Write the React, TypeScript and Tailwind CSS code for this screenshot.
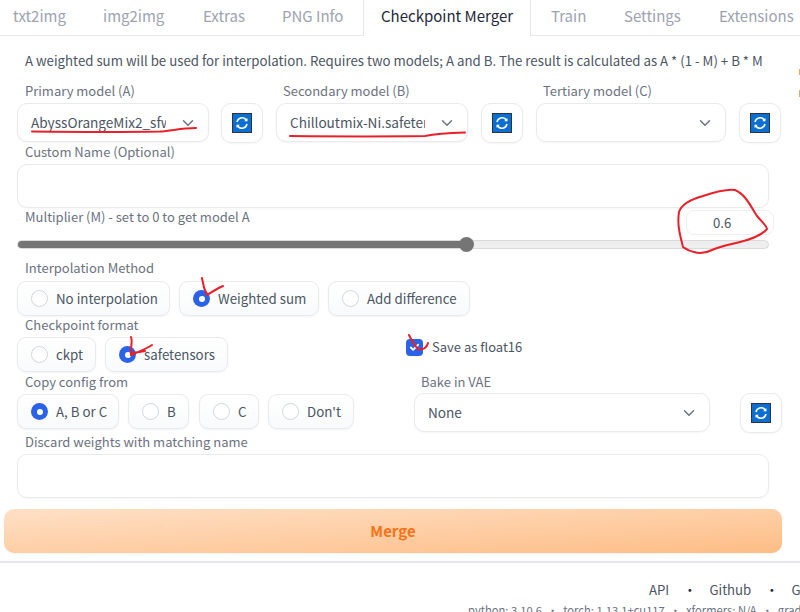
import React from 'react';
import { ChevronDown, Check } from 'lucide-react';

const tabs = [
  { name: 'txt2img', cls: 'w-[85px] pl-[13px] border-b' },
  { name: 'img2img', cls: 'w-[99px] pl-[18px] border-b' },
  { name: 'Extras', cls: 'w-[79px] pl-[19px] border-b' },
  { name: 'PNG Info', cls: 'w-[100px] pl-[19px] border-b' },
  { name: 'Checkpoint Merger', cls: 'w-[168px] pl-[17px] border-x bg-white text-[#1f2937]' },
  { name: 'Train', cls: 'w-[74px] pl-[20px] border-b' },
  { name: 'Settings', cls: 'w-[95px] pl-[19px] border-b' },
  { name: 'Extensions', cls: 'w-[100px] pl-[19px] border-b' },
];

const RefreshButton = () => (
  <div className="w-[42px] h-[40px] shrink-0 flex items-center justify-center rounded-[10px] border border-[#e9eaee] bg-white shadow-[0_1px_2px_rgba(0,0,0,0.04)]">
    <svg width="20" height="20" viewBox="0 0 20 20">
      <rect x="0.5" y="0.5" width="19" height="19" fill="#0b6fd1" stroke="#2b3440" />
      <path d="M5 9a5.2 5.2 0 0 1 8.8-2.6l1.2 1.2M15 11a5.2 5.2 0 0 1-8.8 2.6L5 12.4" fill="none" stroke="#fff" strokeWidth="1.6" />
      <path d="M15.4 5v3.2h-3.2zM4.6 15v-3.2h3.2z" fill="#fff" />
    </svg>
  </div>
);

const Dropdown = ({ value, className }: { value?: string; className: string }) => (
  <div className={`h-[39px] flex items-center justify-between rounded-[10px] border border-[#e9eaee] bg-white shadow-[0_1px_2px_rgba(0,0,0,0.04)] pl-[13px] pr-[11px] ${className}`}>
    <span className="w-[135px] overflow-hidden whitespace-nowrap text-[13.6px] text-[#4b5563]">{value}</span>
    <ChevronDown size={18} strokeWidth={2} className="text-[#6b7280] shrink-0" />
  </div>
);

const Label = ({ children, className = '' }: { children: React.ReactNode; className?: string }) => (
  <div className={`h-[18px] leading-[18px] text-[13px] text-[#6b7280] whitespace-nowrap ${className}`}>{children}</div>
);

const Radio = ({ label, checked, className = '' }: { label: string; checked?: boolean; className?: string }) => (
  <div className={`h-[35px] flex items-center gap-[8px] rounded-[9px] border border-[#e9eaee] bg-gradient-to-b from-white to-[#f9fafb] shadow-[0_1px_2px_rgba(0,0,0,0.05)] ${className}`}>
    {checked ? (
      <span className="w-[17px] h-[17px] rounded-full bg-[#2b63e8] flex items-center justify-center shrink-0">
        <span className="w-[6px] h-[6px] rounded-full bg-white" />
      </span>
    ) : (
      <span className="w-[17px] h-[17px] rounded-full border border-[#d1d5db] bg-white shrink-0" />
    )}
    <span className="text-[13.3px] text-[#4b5563] whitespace-nowrap">{label}</span>
  </div>
);

const TextBox = () => <div className="w-[752px] h-[44px] rounded-[10px] border border-[#e9eaee] bg-white shadow-[0_1px_2px_rgba(0,0,0,0.03)]" />;

export default function App() {
  return (
    <div className="relative w-[800px] h-[612px] overflow-hidden bg-white" style={{ fontFamily: '"Noto Sans CJK SC", "Open Sans", sans-serif' }}>
      {/* tab bar */}
      <div className="h-[36px] flex whitespace-nowrap text-[15px] text-[#9ca3af]">
        {tabs.map((t) => (
          <div key={t.name} className={`h-[36px] pb-[3px] shrink-0 flex items-center border-[#e5e7eb] ${t.cls}`}>{t.name}</div>
        ))}
      </div>

      <div className="pl-[17px] flex flex-col">
        <div className="mt-[16px] pl-[8px] h-[18px] leading-[18px] text-[13.25px] text-[#4b5563] whitespace-nowrap">
          A weighted sum will be used for interpolation. Requires two models; A and B. The result is calculated as A * (1 - M) + B * M
        </div>

        {/* model pickers */}
        <div className="mt-[12px] flex">
          <div className="w-[192px]">
            <Label className="pl-[8px]">Primary model (A)</Label>
            <Dropdown value="AbyssOrangeMix2_sfw" className="mt-[3px] w-[192px]" />
          </div>
          <div className="ml-[12px] mt-[21px]"><RefreshButton /></div>
          <div className="ml-[13px] w-[192px]">
            <Label className="pl-[7px]">Secondary model (B)</Label>
            <Dropdown value="Chilloutmix-Ni.safetensors" className="mt-[3px] w-[192px]" />
          </div>
          <div className="ml-[13px] mt-[21px]"><RefreshButton /></div>
          <div className="ml-[13px] w-[190px]">
            <Label className="pl-[7px]">Tertiary model (C)</Label>
            <Dropdown className="mt-[3px] w-[190px]" />
          </div>
          <div className="ml-[13px] mt-[21px]"><RefreshButton /></div>
        </div>

        <Label className="pl-[8px]">Custom Name (Optional)</Label>
        <div className="mt-[3px]"><TextBox /></div>

        {/* multiplier */}
        <div className="mt-[2px] h-[25px] flex justify-between items-start w-[757px]">
          <div className="pl-[8px] leading-[14px] text-[13px] text-[#6b7280]">Multiplier (M) - set to 0 to get model A</div>
          <div className="w-[88px] h-[25px] flex items-center pl-[26px] rounded-[8px] border border-[#eeeff2] bg-white text-[13.2px] text-[#4b5563]">0.6</div>
        </div>
        <div className="mt-[5px] relative w-[752px] h-[9px] rounded-full bg-[#eeeeee] border border-[#d9dadd]">
          <div className="h-full w-[449px] rounded-l-full bg-[#757575]" />
          <div className="absolute left-[441px] top-[-4px] w-[15px] h-[15px] rounded-full bg-[#757575]" />
        </div>

        <Label className="mt-[10px] pl-[8px]">Interpolation Method</Label>
        <div className="mt-[4px] flex gap-[9px]">
          <Radio label="No interpolation" className="w-[153px] pl-[13px]" />
          <Radio label="Weighted sum" checked className="w-[140px] pl-[13px]" />
          <Radio label="Add difference" className="w-[142px] pl-[13px]" />
        </div>

        <Label className="pl-[8px]">Checkpoint format</Label>
        <div className="mt-[3px] flex">
          <Radio label="ckpt" className="w-[79px] pl-[13px]" />
          <Radio label="safetensors" checked className="ml-[9px] w-[123px] pl-[13px]" />
          <div className="ml-[178px] h-[20px] self-start flex items-center gap-[9px]">
            <span className="w-[17px] h-[17px] rounded-[4px] bg-[#2b63e8] flex items-center justify-center">
              <Check size={11} strokeWidth={4} className="text-white" />
            </span>
            <span className="text-[13px] text-[#4b5563] whitespace-nowrap">Save as float16</span>
          </div>
        </div>

        {/* copy config + vae */}
        <div className="mt-[1px] flex">
          <div className="w-[397px]">
            <Label className="pl-[8px]">Copy config from</Label>
            <div className="mt-[3px] flex">
              <Radio label="A, B or C" checked className="w-[102px] pl-[13px]" />
              <Radio label="B" className="ml-[9px] w-[61px] pl-[13px]" />
              <Radio label="C" className="ml-[10px] w-[60px] pl-[13px]" />
              <Radio label="Don't" className="ml-[9px] w-[86px] pl-[13px]" />
            </div>
          </div>
          <div className="w-[296px]">
            <Label className="pl-[7px]">Bake in VAE</Label>
            <Dropdown value="None" className="mt-[2px] w-[296px]" />
          </div>
          <div className="ml-[30px] mt-[20px]"><RefreshButton /></div>
        </div>

        <Label className="pl-[8px]">Discard weights with matching name</Label>
        <div className="mt-[3px]"><TextBox /></div>

        <div className="mt-[11px] ml-[-13px] w-[778px] h-[44px] flex items-center justify-center rounded-[10px] bg-gradient-to-br from-[#fee0c6] to-[#fdbd85] text-[15px] font-semibold text-[#f97316] shadow-[0_1px_2px_rgba(0,0,0,0.05)]">
          Merge
        </div>
      </div>

      {/* footer */}
      <div className="mt-[8px] border-t-2 border-[#e5e7eb]">
        <div className="mt-[17px] pl-[649px] h-[20px] leading-[20px] flex text-[13.2px] text-[#4b5563] whitespace-nowrap">
          <span>API</span>
          <span className="ml-[14px] mr-[13px] text-[#1f2937]">•</span>
          <span>Github</span>
          <span className="ml-[14px] mr-[13px] text-[#1f2937]">•</span>
          <span>Gradio</span>
        </div>
        <div className="mt-[3px] pl-[468px] h-[14px] leading-[14px] text-[11.2px] text-[#6b7280] whitespace-nowrap">
          python: 3.10.6&nbsp;&nbsp;•&nbsp;&nbsp;torch: 1.13.1+cu117&nbsp;&nbsp;•&nbsp;&nbsp;xformers: N/A&nbsp;&nbsp;•&nbsp;&nbsp;gradio: 3.16.2
        </div>
      </div>

      {/* bits of the next window at the right edge */}
      <div className="absolute right-0 top-[69px] w-[1px] h-[6px] bg-[#e8a868]" />
      <div className="absolute right-0 top-[90px] w-[1px] h-[7px] bg-[#e8a868]" />

      {/* red pen annotations */}
      <svg className="absolute inset-0 pointer-events-none" width="800" height="612" viewBox="0 0 800 612" fill="none" stroke="#e8202a" strokeWidth="2" strokeLinecap="round" strokeLinejoin="round">
        <path d="M32 131.5C80 132 130 132 160 131.5C172 131 180 128 196 128" />
        <path d="M290 136C340 136.500 390 136.500 425 136C435 134 450 133 465 132.500" />
        <path d="M683 247C680 235 677 225 679 212C682 203 692 199 703 196C715 192 727 189 735 190C745 194 750 205 757 216C762 222 767 226 767 229C762 235 752 239 740 242C728 245 718 247 712 250C706 253 700 254 694 252C688 251 686 249 683 247" />
        <path d="M202 278C203 285 205 291 207 295C212 292 218 288 223 286" />
        <path d="M131 337C133 342 130 349 131 355C138 352 146 349 152 345M133 353C137 352 141 352 145 351" />
        <path d="M409 335C412 341 415 346 418 349C423 351 427 347 428 343" />
      </svg>
    </div>
  );
}
